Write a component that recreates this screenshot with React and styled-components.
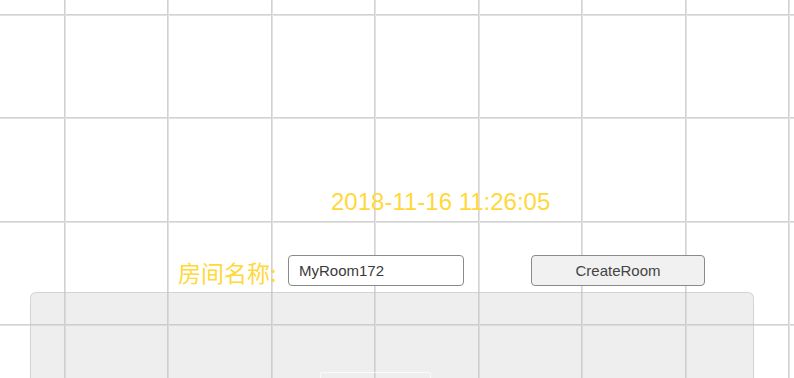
import React from "react";
import styled, { createGlobalStyle } from "styled-components";

const GlobalStyle = createGlobalStyle`
  html, body {
    margin: 0;
    padding: 0;
    background: #ffffff;
  }
  * {
    box-sizing: border-box;
  }
`;

// grid lines repeat every 103.5px, so a 207px period keeps every stop on a whole pixel
const Scene = styled.div`
  width: 794px;
  height: 378px;
  overflow: hidden;
  display: flex;
  flex-direction: column;
  background-color: #ffffff;
  background-image:
    repeating-linear-gradient(
      to right,
      transparent 0 64px,
      #d2d2d2 64px 65px,
      #e2e2e2 65px 66px,
      transparent 66px 167px,
      #d2d2d2 167px 168px,
      #e2e2e2 168px 169px,
      transparent 169px 207px
    ),
    repeating-linear-gradient(
      to bottom,
      transparent 0 14px,
      #d2d2d2 14px 15px,
      #e2e2e2 15px 16px,
      transparent 16px 117px,
      #d2d2d2 117px 118px,
      #e2e2e2 118px 119px,
      transparent 119px 207px
    );
  font-family: "Liberation Sans", Arial, sans-serif;
`;

const Clock = styled.div`
  margin-top: 188px;
  padding-left: 331px;
  height: 28px;
  line-height: 28px;
  font-size: 24px;
  color: #ffd83a;
  white-space: nowrap;
`;

const FormRow = styled.div`
  margin-top: 39px;
  padding-left: 178px;
  height: 31px;
  display: flex;
  align-items: stretch;
`;

const Label = styled.label`
  width: 110px;
  padding-top: 4px;
  font-family: "Noto Sans CJK SC", "Liberation Sans", sans-serif;
  font-size: 23px;
  line-height: 27px;
  color: #ffd83a;
  white-space: nowrap;
`;

const NameInput = styled.input`
  width: 176px;
  height: 31px;
  margin: 0;
  padding: 0 0 0 10px;
  border: 1px solid #8a8a8a;
  border-radius: 4px;
  background: #ffffff;
  font-family: "Liberation Sans", Arial, sans-serif;
  font-size: 15px;
  color: #3a3a3a;
  outline: none;
`;

const CreateButton = styled.button`
  width: 174px;
  height: 31px;
  margin: 0 0 0 67px;
  padding: 0;
  border: 1px solid #8a8a8a;
  border-radius: 4px;
  background: #f1f1f1;
  font-family: "Liberation Sans", Arial, sans-serif;
  font-size: 15px;
  color: #444444;
`;

const RoomPanel = styled.div`
  margin: 6px 0 0 30px;
  width: 724px;
  flex: 1;
  min-height: 0;
  padding: 79px 0 0 289px;
  border: 1px solid rgba(190, 190, 190, 0.55);
  border-bottom: none;
  border-radius: 6px 6px 0 0;
  background: rgba(200, 200, 200, 0.3);
`;

const HiddenSlot = styled.div`
  width: 111px;
  height: 20px;
  border: 1px solid rgba(255, 255, 255, 0.7);
  border-bottom: none;
  border-radius: 2px 2px 0 0;
`;

export default function App() {
  return (
    <>
      <GlobalStyle />
      <Scene>
        <Clock>2018-11-16 11:26:05</Clock>
        <FormRow>
          <Label htmlFor="room-name">房间名称:</Label>
          <NameInput id="room-name" defaultValue="MyRoom172" />
          <CreateButton type="button">CreateRoom</CreateButton>
        </FormRow>
        <RoomPanel>
          <HiddenSlot />
        </RoomPanel>
      </Scene>
    </>
  );
}
